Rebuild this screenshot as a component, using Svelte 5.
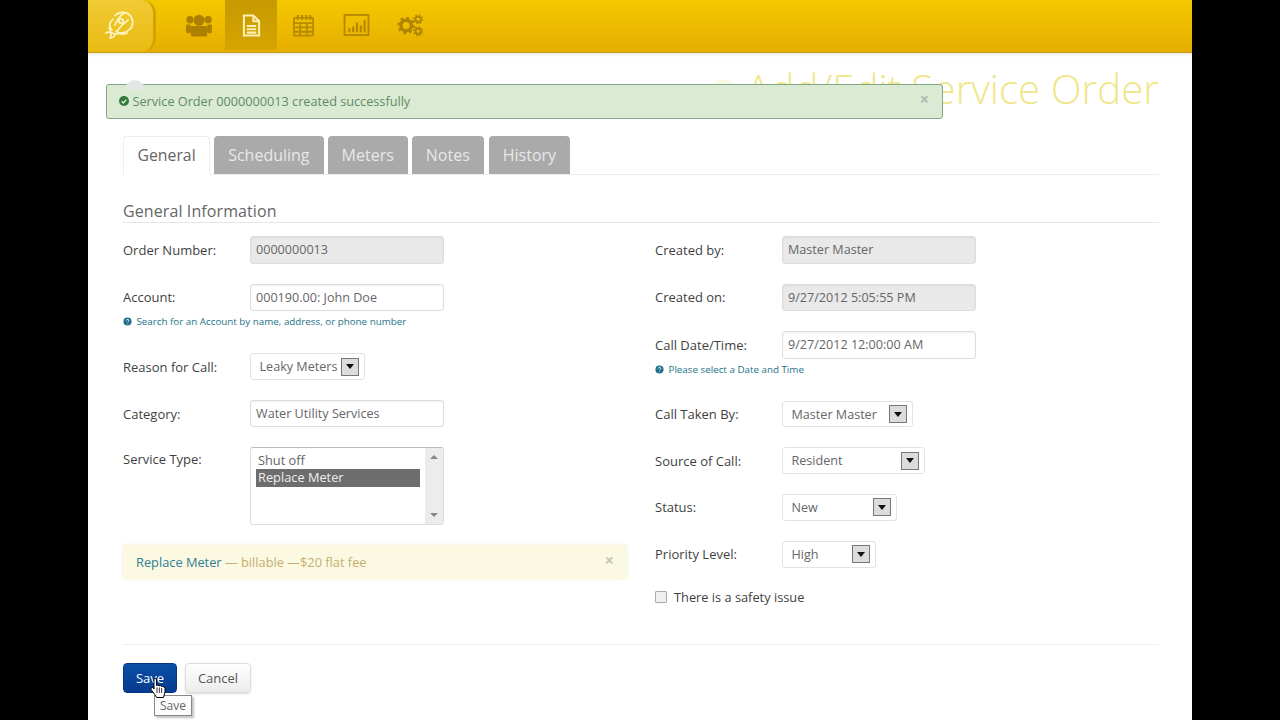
<script>
  const tabs = ['General', 'Scheduling', 'Meters', 'Notes', 'History'];
</script>

{#snippet select(text, cls)}
  <div class="select {cls}">
    <span>{text}</span>
    <i class="arrow"><b></b></i>
  </div>
{/snippet}

{#snippet help(text)}
  <div class="help">
    <svg viewBox="0 0 10 10" width="9" height="9"><circle cx="5" cy="5" r="4.500" fill="#1d6f8a"/><path d="M3.600 3.900c.1-.9.7-1.300 1.500-1.300s1.400.5 1.400 1.200c0 1-1.200 1-1.200 2M5.300 7.200v.8" stroke="#fff" stroke-width="1" fill="none"/></svg>
    <span>{text}</span>
  </div>
{/snippet}

<div class="page">
  <header class="header">
    <div class="logo">
      <svg viewBox="0 0 32 32" width="32" height="32" fill="none" stroke="#fdf3c0" stroke-width="1.700" stroke-linecap="round">
        <path d="M11 5.500C14 2 21 1 25 4.500 30 9 29.500 16 25.500 19.500 22 23 16 24 12 21.500"/>
        <path d="M20 3C16 6 13 10 11 15M24 10C20 13 16 17 13 21M9 9C5 13 5 17 8 20"/>
        <path d="M2 23C6 20 9 25 13 24 17 23 20 25 23 23M5 17.500C7 21 8 25 6 28M11 24.500C10 27 8 28 6 28"/>
        <circle cx="17" cy="11" r="2.200"/>
      </svg>
    </div>
    <nav class="nav">
      <a href="#p" aria-label="People">
        <svg viewBox="0 0 28 24" width="28" height="23" fill="#ad8000">
          <circle cx="14" cy="6.500" r="5.800"/><circle cx="4.500" cy="6" r="3.800"/><circle cx="23.500" cy="6" r="3.800"/>
          <rect x="5.500" y="12.500" width="17" height="11" rx="1.500"/><rect x="0.500" y="11" width="5" height="9" rx="1.500"/><rect x="22.500" y="11" width="5" height="9" rx="1.500"/>
        </svg>
      </a>
      <a href="#o" class="active" aria-label="Orders">
        <svg viewBox="0 0 20 24" width="19" height="23" fill="none" stroke="#fdf0b0" stroke-width="2.200">
          <path d="M2 1.500h10l6 6v15H2z"/><path d="M12 1.500v6h6" /><path d="M5 12.500h10M5 16h10M5 19.500h10"/>
        </svg>
      </a>
      <a href="#c" aria-label="Calendar">
        <svg viewBox="0 0 24 24" width="23" height="23" fill="none" stroke="#b88a00" stroke-width="1.900">
          <rect x="2" y="4" width="20" height="18.500" rx="1"/><path d="M2 9.500h20M2 14h20M2 18.500h20M8.500 9.500v13M15.500 9.500v13"/>
          <path d="M6 1v5M10.500 1v5M15 1v5M19 1v5" stroke-width="2.200"/>
        </svg>
      </a>
      <a href="#r" aria-label="Reports">
        <svg viewBox="0 0 27 23" width="27" height="22" fill="none" stroke="#b58700" stroke-width="1.900">
          <rect x="1" y="1" width="25" height="21"/>
          <path d="M6 19v-4M10 19v-6M14 19V9M18 19v-7M22 19V6" stroke-width="2.200"/>
        </svg>
      </a>
      <a href="#s" aria-label="Settings">
        <svg viewBox="0 0 28 24" width="28" height="23" fill="none" stroke="#b08400">
          <circle cx="10" cy="12" r="5.500" stroke-width="3.500"/>
          <circle cx="10" cy="12" r="8" stroke-width="2.500" stroke-dasharray="2.800 3.500"/>
          <circle cx="22.500" cy="5.500" r="2.800" stroke-width="2"/>
          <circle cx="22.500" cy="5.500" r="4.500" stroke-width="1.500" stroke-dasharray="1.800 1.700"/>
          <circle cx="22.500" cy="18" r="2.800" stroke-width="2"/>
          <circle cx="22.500" cy="18" r="4.500" stroke-width="1.500" stroke-dasharray="1.800 1.700"/>
        </svg>
      </a>
    </nav>
  </header>

  <main class="content">
    <div class="title-row">
      <svg class="title-icon" viewBox="0 0 28 28" width="26" height="26" fill="#fbf8e8"><path d="M2 4h16l8 8v14H2z"/></svg>
      <h1>Add/Edit Service Order</h1>
    </div>

    <ul class="tabs">
      {#each tabs as t, i}
        <li class:current={i === 0}>{t}</li>
      {/each}
    </ul>

    <h2>General Information</h2>

    <div class="columns">
      <section>
        <div class="field"><label for="a">Order Number:</label><div id="a" class="input ro">0000000013</div></div>
        <div class="field tight"><label for="b">Account:</label><div id="b" class="input">000190.00: John Doe</div></div>
        {@render help('Search for an Account by name, address, or phone number')}
        <div class="field"><label for="c">Reason for Call:</label>{@render select('Leaky Meters', 'w-reason')}</div>
        <div class="field short"><label for="d">Category:</label><div id="d" class="input">Water Utility Services</div></div>
        <div class="field top">
          <label for="e">Service Type:</label>
          <div id="e" class="listbox">
            <div class="options">
              <div class="opt">Shut off</div>
              <div class="opt sel">Replace Meter</div>
            </div>
            <div class="scroll"><b class="up"></b><b class="down"></b></div>
          </div>
        </div>
        <div class="notice">
          <span class="name">Replace Meter</span><span class="rest">{' — billable —$20 flat fee'}</span>
          <span class="close">×</span>
        </div>
      </section>

      <section>
        <div class="field"><label for="f">Created by:</label><div id="f" class="input ro">Master Master</div></div>
        <div class="field"><label for="g">Created on:</label><div id="g" class="input ro">9/27/2012 5:05:55 PM</div></div>
        <div class="field tight"><label for="h">Call Date/Time:</label><div id="h" class="input">9/27/2012 12:00:00 AM</div></div>
        {@render help('Please select a Date and Time')}
        <div class="field"><label for="i">Call Taken By:</label>{@render select('Master Master', 'w-taken')}</div>
        <div class="field"><label for="j">Source of Call:</label>{@render select('Resident', 'w-source')}</div>
        <div class="field"><label for="k">Status:</label>{@render select('New', 'w-status')}</div>
        <div class="field"><label for="l">Priority Level:</label>{@render select('High', 'w-priority')}</div>
        <div class="check"><span class="box"></span>There is a safety issue</div>
      </section>
    </div>

    <footer class="actions">
      <button class="primary">Save</button>
      <button class="plain">Cancel</button>
    </footer>
  </main>

  <div class="flash">
    <svg viewBox="0 0 10 10" width="10" height="10"><circle cx="5" cy="5" r="5" fill="#2f7a3c"/><path d="M2.700 5.200l1.700 1.700 3-3.300" stroke="#e3f0d8" stroke-width="1.400" fill="none"/></svg>
    <span>Service Order 0000000013 created successfully</span>
    <span class="flash-x">×</span>
  </div>
  <span class="ghost"></span>

  <div class="tooltip">Save</div>
  <svg class="cursor" viewBox="0 0 17 22" width="17" height="22">
    <path d="M4.500 1.500Q6.500.5 6.500 3V8.500Q8 7.500 9 8.800 10.500 8 11.500 9.500 13 8.800 14 10L15 11V15L13.500 20.500H6.500L5.500 18.500 1 12.500Q.5 10 2.500 10.500L4 12V3Q4 2 4.500 1.500Z" fill="#fff" stroke="#000" stroke-width="1"/>
    <path d="M7 10.500V16M9.300 10.500V16M11.600 11V16" stroke="#000" stroke-width=".8"/>
  </svg>
</div>

<style>
  :global(body) {
    margin: 0;
    background: #000;
    font-family: "Open Sans", "Liberation Sans", sans-serif;
    color: #444;
  }
  .page {
    position: relative;
    width: 1104px;
    height: 720px;
    margin-left: 88px;
    background: #fff;
    overflow: hidden;
  }
  .header {
    display: flex;
    height: 52px;
    background: linear-gradient(#f4c800, #e6ae00);
    border-bottom: 1px solid #c89c10;
    box-shadow: 0 1px 4px rgba(0, 0, 0, .12);
  }
  .logo {
    display: flex;
    align-items: center;
    justify-content: center;
    box-sizing: border-box;
    width: 68px;
    padding-right: 2px;
    background: linear-gradient(#f0cb34, #e9ba12);
    border-right: 3px solid #d3a200;
    border-radius: 0 14px 14px 0;
    margin-right: 16px;
  }
  .nav { display: flex; }
  .nav a {
    display: flex;
    align-items: center;
    justify-content: center;
    width: 53px;
    height: 50px;
  }
  .nav a.active {
    width: 52px;
    background: linear-gradient(#c89a00, #d5a400);
  }
  .content { padding: 0 33px 0 35px; }
  .title-row {
    display: flex;
    align-items: center;
    justify-content: flex-end;
    height: 83px;
    gap: 6px;
    padding-bottom: 12px;
    box-sizing: border-box;
  }
  h1 {
    margin: 0;
    font-size: 40.300px;
    font-weight: 300;
    line-height: 72px;
    color: #f0e68a;
    white-space: nowrap;
  }
  .tabs {
    display: flex;
    gap: 4px;
    margin: 0;
    padding: 0;
    list-style: none;
    height: 38px;
    border-bottom: 1px solid #eee;
  }
  .tabs li {
    display: flex;
    align-items: center;
    height: 38px;
    padding: 0 14px;
    font-size: 16px;
    color: #e8e8e8;
    background: #aaa;
    border-radius: 4px 4px 0 0;
  }
  .tabs li:last-child { margin-left: 1px; }
  .tabs li.current {
    color: #666;
    background: #fff;
    border: 1px solid #eee;
    border-bottom: 0;
    box-sizing: border-box;
    height: 39px;
    padding: 0 13.500px 2px;
    font-size: 15.800px;
  }
  h2 {
    margin: 27px 0 13px;
    height: 20px;
    font-size: 16px;
    font-weight: 500;
    letter-spacing: .1px;
    line-height: 18px;
    color: #666;
    border-bottom: 1px solid #e6e6e6;
  }
  .columns {
    display: grid;
    grid-template-columns: 504px 1fr;
    gap: 28px;
    height: 409px;
    border-bottom: 1px solid #f0f0f0;
    box-sizing: border-box;
  }
  .field {
    display: flex;
    align-items: center;
    margin-bottom: 20px;
    font-size: 13px;
  }
  .field.tight { margin-bottom: 0; }
  .field.short { margin-bottom: 19.500px; }
  .field.top { align-items: flex-start; margin-bottom: 20px; }
  .field.top label { padding-top: 3px; }
  label {
    flex: none;
    width: 127px;
    font-weight: 500;
    color: #3f3f3f;
  }
  .input {
    box-sizing: border-box;
    width: 194px;
    height: 27.600px;
    padding: 0 5px;
    line-height: 25.500px;
    color: #666;
    border: 1px solid #ddd;
    border-radius: 3px;
    box-shadow: inset 0 1px 2px rgba(0, 0, 0, .06);
    font-size: 12.600px;
  }
  .input.ro { background: #e9e9e9; color: #666; }
  .help {
    display: flex;
    align-items: center;
    gap: 4.500px;
    height: 16px;
    margin: 2.700px 0 23.300px;
    font-size: 9.800px;
    color: #1d7388;
  }
  .select {
    box-sizing: border-box;
    display: flex;
    align-items: center;
    justify-content: space-between;
    height: 26.700px;
    padding: 0 5px 0 8.500px;
    border: 1px solid #e3e3e3;
    border-radius: 3px;
    color: #666;
    font-size: 12.600px;
    white-space: nowrap;
  }
  .w-reason { width: 115px; }
  .w-taken { width: 131px; }
  .w-source { width: 143px; }
  .w-status { width: 115px; }
  .w-priority { width: 94px; }
  .arrow {
    display: flex;
    align-items: center;
    justify-content: center;
    box-sizing: border-box;
    width: 18px;
    height: 18px;
    background: #dcdcdc;
    border: 1px solid #777;
  }
  .arrow b {
    width: 0;
    height: 0;
    border-left: 4px solid transparent;
    border-right: 4px solid transparent;
    border-top: 5px solid #111;
  }
  .listbox {
    display: flex;
    box-sizing: border-box;
    width: 194px;
    height: 78px;
    border: 1px solid #ddd;
    border-top-color: #bbb;
    border-radius: 3px;
  }
  .options { flex: 1; padding: 4px 5px 0; }
  .opt {
    height: 17.500px;
    line-height: 17.500px;
    padding-left: 2px;
    font-size: 12.800px;
    color: #666;
  }
  .opt.sel { background: #6d6d6d; color: #eee; }
  .scroll {
    position: relative;
    width: 18px;
    background: #ececec;
  }
  .scroll b {
    position: absolute;
    left: 5px;
    width: 0;
    height: 0;
    border-left: 4px solid transparent;
    border-right: 4px solid transparent;
  }
  .up { top: 7px; border-bottom: 4px solid #888; }
  .down { bottom: 7px; border-top: 4px solid #888; }
  .notice {
    position: relative;
    box-sizing: border-box;
    height: 34px;
    padding: 0 13px;
    line-height: 34px;
    font-size: 12.800px;
    background: #fcf9e2;
    border-radius: 3px;
    box-shadow: 0 0 3px rgba(220, 210, 160, .5);
  }
  .name { color: #2d7d94; }
  .rest { color: #c4ae74; }
  .close {
    position: absolute;
    right: 13px;
    top: -2px;
    color: #c5c5bb;
    font-size: 16px;
    font-weight: 700;
  }
  .check {
    display: flex;
    align-items: center;
    gap: 7px;
    margin-top: 20px;
    font-size: 12.800px;
    color: #3f3f3f;
    font-weight: 500;
    height: 18px;
  }
  .box {
    width: 10px;
    height: 10px;
    background: #f0f0f0;
    border: 1px solid #aaa;
    border-radius: 1px;
  }
  .actions {
    display: flex;
    gap: 8px;
    padding-top: 18px;
  }
  button {
    height: 30px;
    font: 500 13px "Open Sans", sans-serif;
    border-radius: 4px;
  }
  .primary {
    width: 54px;
    padding: 0;
    color: #fff;
    background: linear-gradient(#0a4fa8, #063b8e);
    border: 1px solid #06367f;
  }
  .plain {
    width: 66px;
    padding: 0;
    color: #555;
    background: linear-gradient(#fff, #ececec);
    border: 1px solid #ddd;
    box-shadow: 0 1px 2px rgba(0, 0, 0, .15);
  }
  .flash {
    position: absolute;
    left: 18px;
    top: 84px;
    box-sizing: border-box;
    display: flex;
    align-items: center;
    gap: 3.500px;
    width: 837px;
    height: 35px;
    padding: 0 12px 2px;
    font-size: 12.700px;
    color: #5f8a66;
    background: #dbebd3;
    border: 1px solid #84a688;
    border-radius: 3px;
  }
  .flash-x {
    position: absolute;
    right: 13px;
    top: 3px;
    color: #a9bcae;
    font-size: 16px;
    font-weight: 700;
  }
  .ghost {
    position: absolute;
    left: 37px;
    top: 80px;
    width: 20px;
    height: 10px;
    background: #e4e8e4;
    border-radius: 10px 10px 0 0;
  }
  .cursor {
    position: absolute;
    left: 62px;
    top: 677px;
  }
  .tooltip {
    position: absolute;
    left: 66px;
    top: 695px;
    box-sizing: border-box;
    width: 38px;
    height: 21px;
    line-height: 19px;
    text-align: center;
    font-size: 12px;
    color: #666;
    background: #fcfcfc;
    border: 1px solid #888;
    box-shadow: 2px 2px 2px rgba(0, 0, 0, .25);
  }
</style>
